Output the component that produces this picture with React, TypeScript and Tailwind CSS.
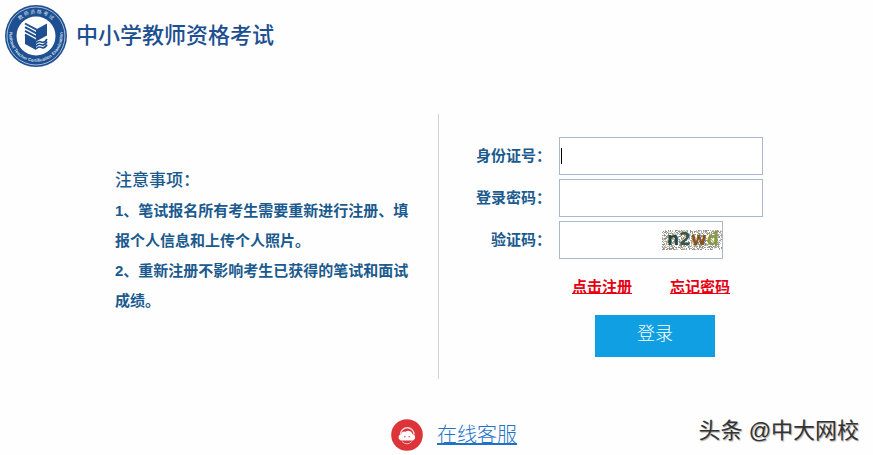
import { useState } from "react";

const notes = [
  "1、笔试报名所有考生需要重新进行注册、填报个人信息和上传个人照片。",
  "2、重新注册不影响考生已获得的笔试和面试成绩。",
];

const Logo = () => (
  <svg viewBox="0 0 64 64" className="size-16 shrink-0" aria-hidden="true">
    <defs>
      <path id="ring-top" d="M9.5 32a22.5 22.5 0 0 1 45 0" />
      <path id="ring-bottom" d="M5.6 28a26.6 26.6 0 1 0 52.8 0" />
    </defs>
    <circle cx="32" cy="32" r="31" fill="#1d4f91" />
    <circle cx="32" cy="32" r="29" fill="none" stroke="#c9d8ea" strokeWidth="0.8" />
    <circle cx="32" cy="32" r="19.5" fill="#fff" />
    <text fill="#d5e1f0" fontSize="5" fontFamily="Noto Sans CJK SC, sans-serif">
      <textPath href="#ring-top" startOffset="50%" textAnchor="middle">教 师 资 格 考 试</textPath>
    </text>
    <text fill="#d5e1f0" fontSize="4.4" fontWeight="bold" fontFamily="Liberation Sans, sans-serif">
      <textPath href="#ring-bottom" startOffset="50%" textAnchor="middle">National Teacher Certification Examination</textPath>
    </text>
    <g fill="#1d4f91">
      <path d="M21 30l11 6v10l-11-6z" />
      <path d="M32 25.500l11-6v12l-11 6z" />
    </g>
    <g fill="none" stroke="#1d4f91" strokeWidth="1.900">
      <path d="M21 19.500l11.500 6.200M21 23.200l11.500 6.200M21 26.900l11.500 6.200M21 30.600l11.500 6.200" />
    </g>
    <g fill="none" stroke="#1d4f91" strokeWidth="1.600">
      <path d="M32 39.500q2.500-3 5.500-1.500t5.500-3M32 42.200q2.500-3 5.500-1.500t5.500-3M32 45q2.500-3 5.500-1.500t5.500-3" />
    </g>
  </svg>
);

const speckColors = ["#8b8f86", "#b9b5ad", "#8d968a", "#d3cfc8", "#b3a69c"];

// small LCG so that the noise is the same on every render
const specks = (() => {
  let seed = 17;
  const next = (n: number) => {
    seed = (seed * 1103515245 + 12345) % 2147483648;
    return Math.floor((seed / 2147483648) * n);
  };
  return Array.from({ length: 1100 }, () => ({
    x: next(60),
    y: next(20),
    color: speckColors[next(5)],
  }));
})();

const Captcha = () => (
  <svg viewBox="0 0 60 20" className="h-5 w-[60px]" role="img" aria-label="n2wd">
    {specks.map((s, i) => (
      <rect key={i} x={s.x} y={s.y} width="1" height="1" fill={s.color} />
    ))}
    <text x="5" y="15" fontFamily="DejaVu Sans, sans-serif" fontSize="17" fontWeight="bold">
      <tspan fill="#26463c">n</tspan>
      <tspan fill="#3b554a">2</tspan>
      <tspan fill="#85531c">w</tspan>
      <tspan fill="#8a9a3c">d</tspan>
    </text>
  </svg>
);

const ServiceIcon = () => (
  <svg viewBox="0 0 32 32" className="size-8" aria-hidden="true">
    <circle cx="16" cy="16" r="15.800" fill="#dc3439" />
    <path d="M9.500 15.500a6.800 6.800 0 1 1 13.600 0" fill="none" stroke="#f8d3d4" strokeWidth="1.400" />
    <path d="M10.500 21.500a3.200 3.200 0 0 1-.5-6.300 3.600 3.600 0 0 1 4.500-2.400 4.400 4.400 0 0 1 7 2.200 3.400 3.400 0 0 1 .5 6.500z" fill="#fff" />
    <path d="M13 17.800h1.500M17.500 17.800H19" stroke="#dc3439" strokeWidth="1" />
    <path d="M11 22.500q2 2.300 5 2.300t4.800-2.300" fill="none" stroke="#f3b4b6" strokeWidth="1" />
  </svg>
);

const inputClass = "h-[38px] border border-[#a9b8cd] bg-white px-1 text-sm outline-none";
const labelClass = "w-28 shrink-0 text-right text-[15px] font-bold text-[#1b5a8e]";

const App = () => {
  const [idNumber, setIdNumber] = useState("");
  const [password, setPassword] = useState("");
  const [code, setCode] = useState("");

  return (
    <div className="relative bg-[#fefefe] font-['Liberation_Sans','Noto_Sans_CJK_SC',sans-serif]">
      <header className="flex items-center gap-2 px-1 pt-1">
        <Logo />
        <h1 className="text-[22px] font-medium leading-8 text-[#1d4f91]">中小学教师资格考试</h1>
      </header>

      <main className="mt-[46px] grid grid-cols-2 pl-[3px]">
        <section className="flex justify-end pr-7 pt-[52px] text-[#1b5a8e]">
          <div className="w-[295px]">
            <h2 className="text-[17px] font-medium leading-[30px]">注意事项：</h2>
            {notes.map((note) => (
              <p key={note} className="text-[15px] font-bold leading-[30px]">{note}</p>
            ))}
          </div>
        </section>

        <section className="h-[265px] border-l border-[#cfd2d6] pt-[23px]">
          <form onSubmit={(e) => e.preventDefault()}>
            <div className="flex flex-col gap-1">
              <div className="flex items-center gap-2">
                <label htmlFor="id-number" className={labelClass}>身份证号：</label>
                <div className="relative flex">
                  <input
                    id="id-number"
                    className={`${inputClass} w-[204px]`}
                    value={idNumber}
                    onChange={(e) => setIdNumber(e.target.value)}
                  />
                  {!idNumber && <span className="pointer-events-none absolute left-0.5 top-[11px] h-4 w-px bg-black" />}
                </div>
              </div>
              <div className="flex items-center gap-2">
                <label htmlFor="password" className={labelClass}>登录密码：</label>
                <input
                  id="password"
                  type="password"
                  className={`${inputClass} w-[204px]`}
                  value={password}
                  onChange={(e) => setPassword(e.target.value)}
                />
              </div>
              <div className="flex items-center gap-2">
                <label htmlFor="code" className={labelClass}>验证码：</label>
                <div className="relative flex">
                  <input
                    id="code"
                    className={`${inputClass} w-[164px] pr-16`}
                    value={code}
                    onChange={(e) => setCode(e.target.value)}
                  />
                  <div className="absolute right-px top-[9px]">
                    <Captcha />
                  </div>
                </div>
              </div>
            </div>

            <div className="mt-4 flex gap-[38px] pl-[133px] text-[15px] font-bold leading-6 text-[#e60012] underline">
              <a href="#register">点击注册</a>
              <a href="#forgot">忘记密码</a>
            </div>
            <button type="submit" className="ml-[156px] mt-4 block h-[42px] w-[120px] bg-[#109fe3] pb-1 text-lg font-light text-white">
              登录
            </button>
          </form>
        </section>
      </main>

      <footer className="mt-10 flex items-center justify-center gap-3.5 pb-1 pl-[35px]">
        <ServiceIcon />
        <a href="#service" className="text-xl font-light text-[#1e73c8] underline">在线客服</a>
      </footer>

      <div className="absolute bottom-2 right-3.5 text-[22px] leading-8 text-[#333] [text-shadow:1px_1px_1px_#aaa]">
        头条 @中大网校
      </div>
    </div>
  );
};

export default App;
